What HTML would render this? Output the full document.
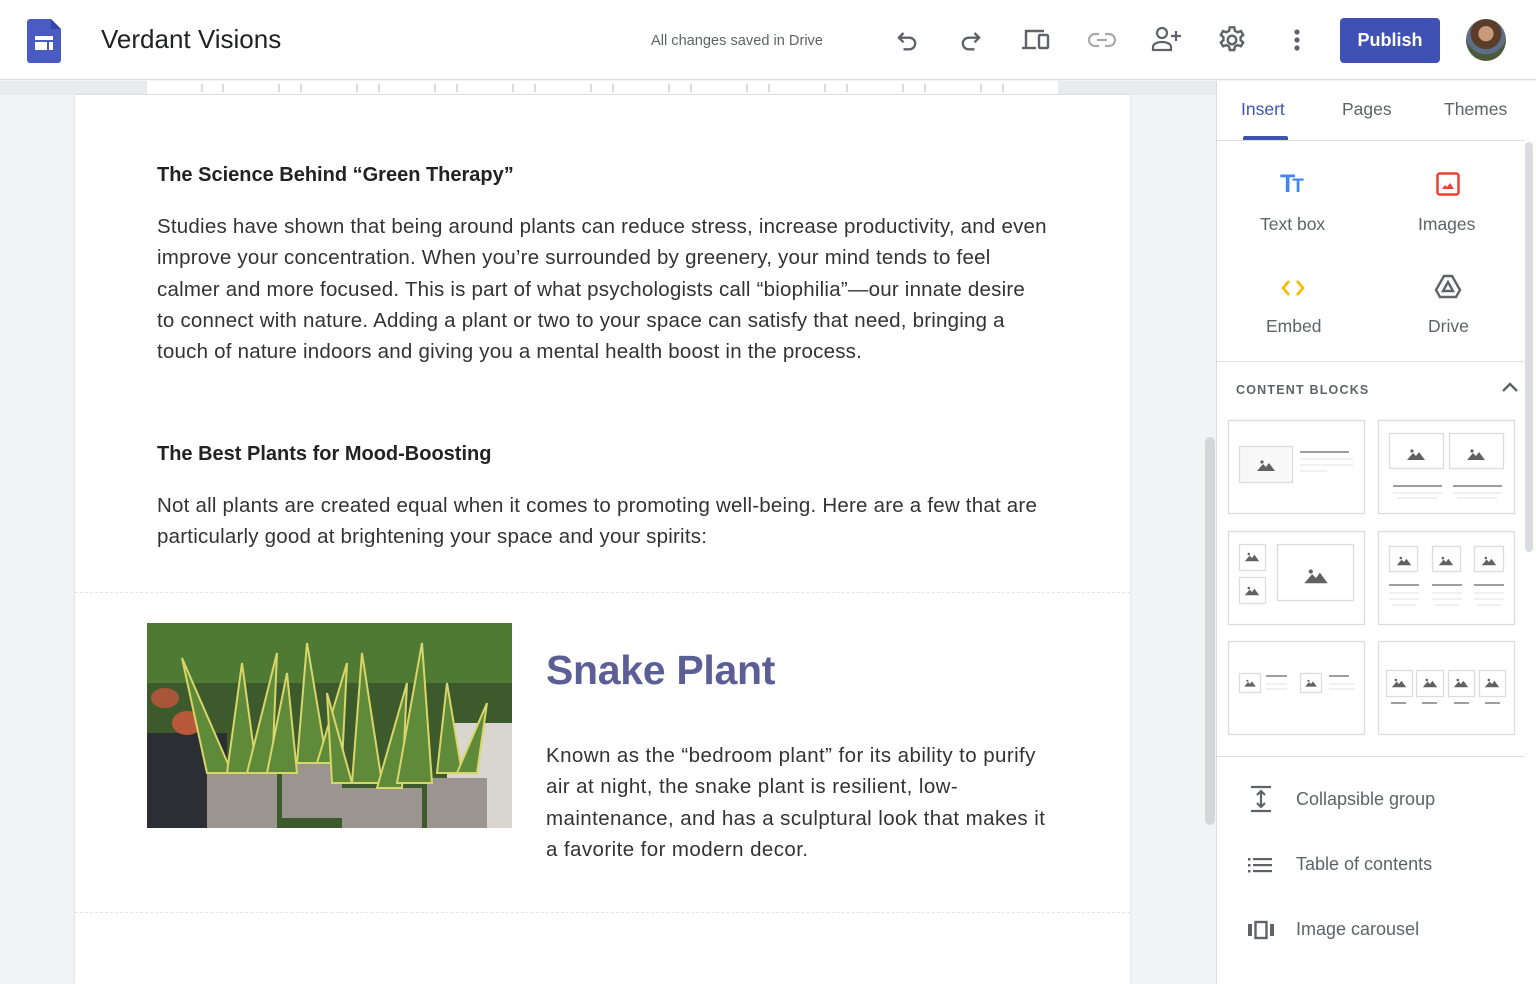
<!DOCTYPE html>
<html><head><meta charset="utf-8"><style>
*{margin:0;padding:0;box-sizing:border-box}
body{width:1536px;height:984px;overflow:hidden;font-family:"Liberation Sans",sans-serif;background:#f1f3f4;position:relative}
.a{position:absolute}
#hdr{left:0;top:0;width:1536px;height:80px;background:#fff;border-bottom:1px solid #dadce0}
.body{font-family:"Liberation Sans",sans-serif;font-size:20.5px;line-height:31.3px;color:#333;white-space:nowrap;letter-spacing:0.22px}
.h{font-weight:bold;font-size:20px;color:#222}
.sb{color:#5f6368;font-size:17.5px}
</style></head><body>
<div id="hdr" class="a">
 <svg class="a" style="left:27px;top:19px" width="34" height="44" viewBox="0 0 34 44"><path d="M3 0h21l10 10v31a3 3 0 0 1-3 3H3a3 3 0 0 1-3-3V3a3 3 0 0 1 3-3z" fill="#4b5bc4"/><path d="M24 0l10 10H24z" fill="#3445a8"/><rect x="8" y="17" width="18" height="4" fill="#fff"/><rect x="8" y="23" width="12" height="8" fill="#fff"/><rect x="22" y="23" width="4" height="8" fill="#fff"/></svg>
 <div class="a" style="left:101px;top:24px;font-size:26px;color:#202124">Verdant Visions</div>
 <div class="a" style="left:651px;top:33px;font-size:14.6px;color:#5f6368">All changes saved in Drive</div>
 <svg class="a" style="left:893px;top:26px" width="28" height="28" viewBox="0 0 24 24" fill="none" stroke="#5f6368" stroke-width="2"><path d="M9 6L5 10l4 4"/><path d="M5 10h9a5 5 0 0 1 0 10h-5"/></svg>
 <svg class="a" style="left:957px;top:26px" width="28" height="28" viewBox="0 0 24 24" fill="none" stroke="#5f6368" stroke-width="2"><path d="M15 6l4 4-4 4"/><path d="M19 10h-9a5 5 0 0 0 0 10h5"/></svg>
 <svg class="a" style="left:1021px;top:26px" width="30" height="28" viewBox="0 0 30 28" fill="none" stroke="#5f6368" stroke-width="2.4"><path d="M5 21V5h18"/><path d="M1 22h14"/><rect x="18" y="9" width="9" height="13" rx="1"/></svg>
 <svg class="a" style="left:1088px;top:30px" width="28" height="20" viewBox="0 0 28 20" fill="none" stroke="#aaa" stroke-width="2.2"><path d="M11 4H7a6 6 0 0 0 0 12h4M17 4h4a6 6 0 0 1 0 12h-4M9 10h10"/></svg>
 <svg class="a" style="left:1151px;top:25px" width="32" height="28" viewBox="0 0 32 28" fill="none" stroke="#5f6368" stroke-width="2.2"><circle cx="11" cy="8" r="5"/><path d="M2 25v-3c0-3 4-5 9-5s9 2 9 5v3z"/><path d="M25 6v10M20 11h10"/></svg>
 <svg class="a" style="left:1216px;top:24px" width="32" height="32" viewBox="0 0 24 24" fill="none" stroke="#5f6368" stroke-width="1.8"><circle cx="12" cy="12" r="3.2"/><path d="M10.3 2.5h3.4l.5 2.6 2 1.1 2.5-.9 1.7 2.9-2 1.7v2.2l2 1.7-1.7 2.9-2.5-.9-2 1.1-.5 2.6h-3.4l-.5-2.6-2-1.1-2.5.9-1.7-2.9 2-1.7v-2.2l-2-1.7 1.7-2.9 2.5.9 2-1.1z"/></svg>
 <svg class="a" style="left:1290px;top:28px" width="14" height="26" viewBox="0 0 14 26"><circle cx="7" cy="4" r="2.6" fill="#5f6368"/><circle cx="7" cy="12" r="2.6" fill="#5f6368"/><circle cx="7" cy="20" r="2.6" fill="#5f6368"/></svg>
 <div class="a" style="left:1340px;top:18px;width:100px;height:45px;background:#3f51b5;border-radius:4px;color:#fff;font-size:18px;font-weight:bold;text-align:center;line-height:45px">Publish</div>
 <div class="a" style="left:1466px;top:19px;width:40px;height:42px;border-radius:50%;background:radial-gradient(circle at 50% 35%,#c99a7a 0 22%,#5a3d2a 23% 45%,#5b6f8a 46% 60%,#4c5a3a 61%)"></div>
</div>
<div class="a" style="left:0;top:81px;width:1216px;height:14px;background:#e8eaed"></div>
<div class="a" style="left:147px;top:81px;width:911px;height:13px;background:#fff"></div>
<svg class="a" style="left:147px;top:81px" width="911" height="13">
<g stroke="#bbb" stroke-width="1">
<path d="M55 3v8M76 3v8M132 3v8M154 3v8M210 3v8M232 3v8M288 3v8M310 3v8M366 3v8M388 3v8M444 3v8M466 3v8M522 3v8M544 3v8M600 3v8M622 3v8M678 3v8M700 3v8M756 3v8M778 3v8M834 3v8M856 3v8"/>
</g></svg>
<div class="a" style="left:75px;top:95px;width:1055px;height:889px;background:#fff;box-shadow:0 0 2px rgba(0,0,0,.15)"></div>
<div class="a h" style="left:157px;top:164px">The Science Behind “Green Therapy”</div>
<div class="a body" style="left:157px;top:211px">Studies have shown that being around plants can reduce stress, increase productivity, and even<br>improve your concentration. When you’re surrounded by greenery, your mind tends to feel<br>calmer and more focused. This is part of what psychologists call “biophilia”—our innate desire<br>to connect with nature. Adding a plant or two to your space can satisfy that need, bringing a<br>touch of nature indoors and giving you a mental health boost in the process.</div>
<div class="a h" style="left:157px;top:443px">The Best Plants for Mood-Boosting</div>
<div class="a body" style="left:157px;top:490px">Not all plants are created equal when it comes to promoting well-being. Here are a few that are<br>particularly good at brightening your space and your spirits:</div>
<div class="a" style="left:75px;top:592px;width:1055px;border-top:1px dashed #e6e6e6"></div>
<div class="a" style="left:75px;top:912px;width:1055px;border-top:1px dashed #e6e6e6"></div>
<svg class="a" style="left:147px;top:623px" width="365" height="205" viewBox="0 0 365 205">
<rect width="365" height="205" fill="#3d5a2c"/>
<rect x="0" y="0" width="365" height="60" fill="#4f7a34"/>
<rect x="0" y="110" width="80" height="95" fill="#2b2e33"/>
<rect x="300" y="100" width="65" height="105" fill="#d9d6d0"/>
<ellipse cx="40" cy="100" rx="15" ry="12" fill="#b85a3a"/>
<ellipse cx="18" cy="75" rx="14" ry="10" fill="#a9553a"/>
<g fill="#9a958e"><rect x="60" y="150" width="70" height="55"/><rect x="135" y="140" width="60" height="55"/><rect x="195" y="165" width="80" height="40"/><rect x="280" y="155" width="60" height="50"/></g>
<g fill="#5f8a3a" stroke="#d8d56a" stroke-width="2">
<path d="M60 150 L35 35 L85 150z"/><path d="M80 150 L95 40 L110 150z"/><path d="M100 150 L130 30 L125 150z"/>
<path d="M150 140 L160 20 L180 140z"/><path d="M170 140 L200 40 L195 140z"/><path d="M205 160 L215 30 L235 160z"/>
<path d="M230 165 L260 60 L255 165z"/><path d="M250 160 L275 20 L285 160z"/><path d="M290 150 L300 60 L315 150z"/><path d="M310 150 L340 80 L330 150z"/>
<path d="M120 150 L140 50 L150 150z"/><path d="M185 160 L180 70 L205 160z"/>
</g>
</svg>
<div class="a" style="left:546px;top:647px;font-size:41px;font-weight:bold;color:#5c5f96;letter-spacing:-0.3px">Snake Plant</div>
<div class="a body" style="left:546px;top:740px;letter-spacing:0.42px">Known as the “bedroom plant” for its ability to purify<br>air at night, the snake plant is resilient, low-<br>maintenance, and has a sculptural look that makes it<br>a favorite for modern decor.</div>
<div class="a" style="left:1205px;top:437px;width:10px;height:388px;background:#d4d6d9;border-radius:5px"></div>
<div class="a" style="left:1216px;top:81px;width:320px;height:903px;background:#fff;border-left:1px solid #dadce0"></div>
<div class="a" style="left:1241px;top:99px;font-size:17.5px;color:#3f51b5">Insert</div>
<div class="a" style="left:1342px;top:99px;font-size:17.5px;color:#5f6368">Pages</div>
<div class="a" style="left:1444px;top:99px;font-size:17.5px;color:#5f6368">Themes</div>
<div class="a" style="left:1243px;top:136px;width:45px;height:4px;background:#3f51b5;border-radius:2px 2px 0 0"></div>
<div class="a" style="left:1217px;top:140px;width:308px;height:1px;background:#e0e0e0"></div>
<div class="a" style="left:1525px;top:142px;width:8px;height:410px;background:#dadce0;border-radius:4px"></div>
<div class="a" style="left:1280px;top:170px;font-size:25px;font-weight:bold;color:#4285f4;letter-spacing:-3px">T<span style="font-size:19px">T</span></div>
<svg class="a" style="left:1436px;top:172px" width="24" height="24" viewBox="0 0 24 24"><rect x="1.5" y="1.5" width="21" height="21" rx="2" fill="none" stroke="#ea4335" stroke-width="2.5"/><path d="M6 17l3-4 2 2 3-4 4 6z" fill="#ea4335"/></svg>
<div class="a sb" style="left:1260px;top:214px">Text box</div>
<div class="a sb" style="left:1418px;top:214px">Images</div>
<svg class="a" style="left:1280px;top:278px" width="26" height="20" viewBox="0 0 26 20" fill="none" stroke="#fbbc04" stroke-width="2.8"><path d="M9 3L3 10l6 7M17 3l6 7-6 7"/></svg>
<svg class="a" style="left:1434px;top:273px" width="28" height="27" viewBox="0 0 28 27" fill="none" stroke="#5f6368" stroke-width="2.4"><path d="M10 3h8l8 14-4 7H6l-4-7z"/><path d="M14 9l5 9H9z"/></svg>
<div class="a sb" style="left:1266px;top:316px">Embed</div>
<div class="a sb" style="left:1428px;top:316px">Drive</div>
<div class="a" style="left:1217px;top:361px;width:308px;height:1px;background:#e0e0e0"></div>
<div class="a" style="left:1236px;top:383px;font-size:12.5px;font-weight:bold;color:#5f6368;letter-spacing:1.2px">CONTENT BLOCKS</div>
<svg class="a" style="left:1501px;top:381px" width="18" height="12" viewBox="0 0 18 12" fill="none" stroke="#5f6368" stroke-width="2.4"><path d="M2 10l7-7 7 7"/></svg>
<svg class="a" style="left:0;top:0" width="1536" height="984" overflow="visible">
<defs><g id="m"><circle cx="-4" cy="-5" r="1.6" fill="#616161"/><path d="M-9 4l6-7 3 3 3-4 6 8z" fill="#616161"/></g></defs>
<g fill="#fff" stroke="#dadce0" stroke-width="1.3">
<rect x="1228.5" y="420.5" width="136" height="93"/><rect x="1378.5" y="420.5" width="136" height="93"/>
<rect x="1228.5" y="531.5" width="136" height="93"/><rect x="1378.5" y="531.5" width="136" height="93"/>
<rect x="1228.5" y="641.5" width="136" height="93"/><rect x="1378.5" y="641.5" width="136" height="93"/>
<rect x="1239.5" y="446.5" width="53" height="36" fill="#f8f8f8"/>
<rect x="1389.5" y="433.5" width="54" height="35"/><rect x="1449.5" y="433.5" width="54" height="35"/>
<rect x="1239.5" y="544.5" width="26" height="26"/><rect x="1239.5" y="577.5" width="26" height="26"/><rect x="1277.5" y="544.5" width="76" height="56"/>
<rect x="1389.5" y="546.5" width="28" height="25"/><rect x="1432.5" y="546.5" width="28" height="25"/><rect x="1474.5" y="546.5" width="29" height="25"/>
<rect x="1239.5" y="673.5" width="21" height="19"/><rect x="1300.5" y="673.5" width="21" height="19"/>
<rect x="1386.5" y="670.5" width="26" height="26"/><rect x="1416.5" y="670.5" width="27" height="26"/><rect x="1448.5" y="670.5" width="26" height="26"/><rect x="1479.5" y="670.5" width="26" height="26"/>
</g>
<use href="#m" x="1266" y="467"/><use href="#m" x="1416" y="456"/><use href="#m" x="1476" y="456"/>
<g transform="translate(1252 558) scale(.8)"><use href="#m"/></g><g transform="translate(1252 592) scale(.8)"><use href="#m"/></g>
<g transform="translate(1316 578) scale(1.3)"><use href="#m"/></g>
<g transform="translate(1404 562) scale(.8)"><use href="#m"/></g><g transform="translate(1446 562) scale(.8)"><use href="#m"/></g><g transform="translate(1489 562) scale(.8)"><use href="#m"/></g>
<g transform="translate(1250 684) scale(.65)"><use href="#m"/></g><g transform="translate(1311 684) scale(.65)"><use href="#m"/></g>
<g transform="translate(1399 684) scale(.8)"><use href="#m"/></g><g transform="translate(1430 684) scale(.8)"><use href="#m"/></g><g transform="translate(1461 684) scale(.8)"><use href="#m"/></g><g transform="translate(1492 684) scale(.8)"><use href="#m"/></g>
<g stroke="#9e9e9e" stroke-width="2"><path d="M1300 452h49M1393 486h49M1453 486h49M1389 585h30M1432 585h30M1474 585h30M1266 676h21M1329 676h20M1391 703h15M1422 703h15M1454 703h15M1485 703h15"/></g>
<g stroke="#e0e0e0" stroke-width="1"><path d="M1300 459h53M1300 465h53M1300 471h27M1393 493h49M1397 498h40M1453 493h49M1457 498h40M1389 593h30M1389 599h30M1392 605h24M1432 593h30M1432 599h30M1435 605h24M1474 593h30M1474 599h30M1477 605h24M1266 684h21M1266 689h21M1329 684h26M1329 689h26"/></g>
</svg>
<div class="a" style="left:1217px;top:756px;width:308px;height:1px;background:#e0e0e0"></div>
<svg class="a" style="left:1249px;top:785px" width="24" height="28" viewBox="0 0 24 28" fill="none" stroke="#5f6368" stroke-width="2.2"><path d="M2 2h20M2 26h20M12 7v14"/><path d="M8 10l4-4 4 4M8 18l4 4 4-4"/></svg>
<div class="a sb" style="left:1296px;top:789px;font-size:18px">Collapsible group</div>
<svg class="a" style="left:1248px;top:856px" width="26" height="18" viewBox="0 0 26 18" fill="#5f6368"><rect x="0" y="2" width="2.5" height="2.5"/><rect x="0" y="8" width="2.5" height="2.5"/><rect x="0" y="14" width="2.5" height="2.5"/><rect x="5" y="2" width="19" height="2.2"/><rect x="5" y="8" width="19" height="2.2"/><rect x="5" y="14" width="19" height="2.2"/></svg>
<div class="a sb" style="left:1296px;top:854px;font-size:18px">Table of contents</div>
<svg class="a" style="left:1247px;top:920px" width="28" height="20" viewBox="0 0 28 20"><rect x="1" y="4" width="4" height="12" fill="#5f6368"/><rect x="23" y="4" width="4" height="12" fill="#5f6368"/><rect x="8.5" y="2" width="11" height="16" fill="none" stroke="#5f6368" stroke-width="2.4"/></svg>
<div class="a sb" style="left:1296px;top:919px;font-size:18px">Image carousel</div>
</body></html>
